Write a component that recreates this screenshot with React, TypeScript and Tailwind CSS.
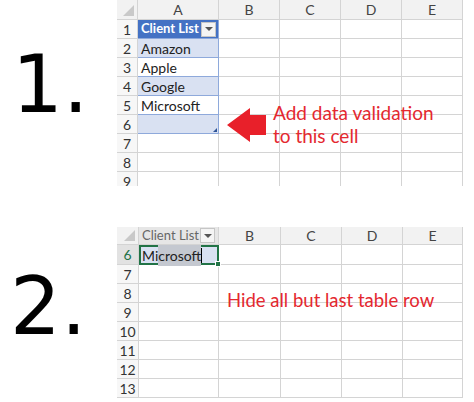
import React from "react";

const font = { fontFamily: "Lato, 'Open Sans', sans-serif" };
const bigFont = { fontFamily: "'DejaVu Sans', sans-serif" };

function DropBtn() {
  return (
    <div className="flex h-[15px] w-[15px] shrink-0 items-center justify-center border border-[#c6c6c6] bg-[#f4f4f4]">
      <div className="h-0 w-0 border-x-[4px] border-t-[4px] border-x-transparent border-t-[#555]" />
    </div>
  );
}

function Corner() {
  return (
    <div className="flex h-full w-full items-end justify-end p-[3px]">
      <div className="h-0 w-0 border-b-[11px] border-l-[11px] border-l-transparent border-b-[#c9c9c9]" />
    </div>
  );
}

const cols1 = ["A", "B", "C", "D", "E"];

function FirstSheet() {
  const rows = [
    { n: "1", a: "Client List", kind: "head" },
    { n: "2", a: "Amazon", kind: "band" },
    { n: "3", a: "Apple", kind: "plain" },
    { n: "4", a: "Google", kind: "band" },
    { n: "5", a: "Microsoft", kind: "plain" },
    { n: "6", a: "", kind: "last" },
    { n: "7", a: "", kind: "none" },
    { n: "8", a: "", kind: "none" },
    { n: "9", a: "", kind: "none" },
  ];
  return (
    <div className="relative h-[186px] overflow-hidden text-[14px] text-[#222]" style={font}>
      <div className="grid grid-cols-[21px_81px_61px_61px_61px_61px]">
        <div className="h-[20px] border-r border-b border-[#d4d4d4] bg-[#f2f2f2]">
          <Corner />
        </div>
        {cols1.map((c) => (
          <div
            key={c}
            className="flex h-[20px] items-center justify-center border-r border-b border-[#d4d4d4] bg-[#f2f2f2] text-[#444]"
          >
            {c}
          </div>
        ))}
        {rows.map((r) => (
          <React.Fragment key={r.n}>
            <div className="flex h-[19px] items-center justify-center border-r border-b border-[#d4d4d4] bg-[#f7f7f7] text-[#333]">
              {r.n}
            </div>
            {r.kind === "head" ? (
              <div className="flex h-[19px] items-center justify-between overflow-hidden border-r border-b border-[#8ea9db] bg-[#4472c4] pl-[3px] pr-[2px] text-[13px] font-bold whitespace-nowrap text-white">
                <span>{r.a}</span>
                <DropBtn />
              </div>
            ) : r.kind === "none" ? (
              <div className="h-[19px] border-r border-b border-[#d4d4d4]" />
            ) : (
              <div
                className={
                  "relative flex h-[19px] items-center border-r border-b border-[#8ea9db] pl-[3px] " +
                  (r.kind === "plain" ? "bg-white" : "bg-[#d9e1f2]")
                }
              >
                {r.a}
                {r.kind === "last" && (
                  <div className="absolute right-[1px] bottom-[1px] h-0 w-0 border-b-[4px] border-l-[4px] border-l-transparent border-b-[#2f5597]" />
                )}
              </div>
            )}
            {[0, 1, 2, 3].map((i) => (
              <div key={i} className="h-[19px] border-r border-b border-[#d4d4d4]" />
            ))}
          </React.Fragment>
        ))}
      </div>

      <svg className="absolute left-[110px] top-[108px]" width="40" height="35" viewBox="0 0 40 35">
        <polygon points="0,17 23,0 23,7 39,7 39,27 23,27 23,34" fill="#e8202a" />
      </svg>
      <div className="absolute left-[156px] top-[101px] text-[19px] leading-[23px] text-[#e4282f]">
        <div>Add data validation</div>
        <div>to this cell</div>
      </div>
    </div>
  );
}

function SecondSheet() {
  const nums = ["7", "8", "9", "10", "11", "12", "13"];
  return (
    <div className="relative h-[175px] overflow-hidden text-[14px] text-[#222]" style={font}>
      <div className="grid grid-cols-[22px_80px_62px_61px_61px_60px]">
        <div className="h-[18px] border-r border-b border-[#d4d4d4] bg-[#f2f2f2]">
          <Corner />
        </div>
        <div className="flex h-[18px] items-center justify-between overflow-hidden border-r border-b border-[#d4d4d4] bg-[#e6e6e6] pl-[3px] pr-[3px] text-[13px] whitespace-nowrap text-[#666]">
          <span>Client List</span>
          <DropBtn />
        </div>
        {["B", "C", "D", "E"].map((c) => (
          <div
            key={c}
            className="flex h-[18px] items-center justify-center border-r border-b border-[#d4d4d4] bg-[#f2f2f2] text-[#444]"
          >
            {c}
          </div>
        ))}

        <div className="flex h-[20px] items-center justify-center border-r border-b border-[#d4d4d4] bg-[#e2e2e2] text-[#217346]">
          6
        </div>
        <div className="relative flex h-[20px] items-center border-2 border-[#217346] bg-[#d9e1f2] pl-[1px] whitespace-nowrap">
          <span>Mi</span>
          <span className="bg-[#c4c8d0]">crosoft</span>
          <span className="h-[15px] w-px bg-black" />
          <div className="absolute -right-[4px] -bottom-[4px] h-[6px] w-[6px] border border-white bg-[#217346]" />
        </div>
        {[0, 1, 2, 3].map((i) => (
          <div key={i} className="h-[20px] border-r border-b border-[#d4d4d4]" />
        ))}

        {nums.map((n) => (
          <React.Fragment key={n}>
            <div className="flex h-[19px] items-center justify-center border-r border-b border-[#d4d4d4] bg-[#f7f7f7] text-[#333]">
              {n}
            </div>
            {[0, 1, 2, 3, 4].map((i) => (
              <div key={i} className="h-[19px] border-r border-b border-[#d4d4d4]" />
            ))}
          </React.Fragment>
        ))}
      </div>
      <div className="absolute left-[110px] top-[62px] text-[18.5px] leading-[23px] text-[#e4282f]">
        Hide all but last table row
      </div>
    </div>
  );
}

export default function App() {
  return (
    <div className="h-[402px] w-[474px] overflow-hidden bg-white" style={font}>
      <div className="flex">
        <div className="w-[117px] shrink-0 pt-[45px] pl-[12px] text-[80px] leading-none text-black" style={bigFont}>
          1.
        </div>
        <FirstSheet />
      </div>
      <div className="mt-[41px] flex">
        <div className="w-[117px] shrink-0 pt-[40px] pl-[10px] text-[80px] leading-none text-black" style={bigFont}>
          2.
        </div>
        <SecondSheet />
      </div>
    </div>
  );
}
